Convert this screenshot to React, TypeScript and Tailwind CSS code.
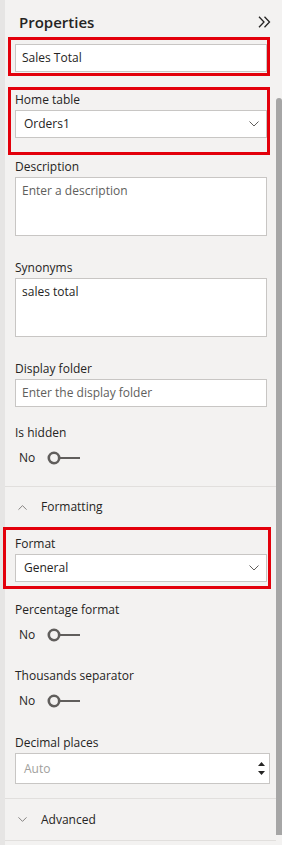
import { ChevronDown, ChevronUp } from 'lucide-react';

const font = { fontFamily: '"Segoe UI", "Open Sans", sans-serif' };

const Label = ({ text }: { text: string }) => (
  <div className="h-[20px] text-[12px] leading-[20px] text-[#252423]">{text}</div>
);

const Toggle = () => (
  <div className="flex h-[24px] items-center pl-[4px]">
    <span className="w-[28px] text-[12px] text-[#252423]">No</span>
    <svg width="36" height="16" viewBox="0 0 36 16">
      <circle cx="7" cy="8" r="5.2" fill="none" stroke="#605e5c" strokeWidth="2.6" />
      <line x1="12.5" y1="8" x2="33" y2="8" stroke="#605e5c" strokeWidth="2" />
    </svg>
  </div>
);

const Select = ({ value }: { value: string }) => (
  <div className="flex h-[28px] w-[252px] items-center justify-between border border-[#c8c6c4] bg-white pl-[8px] pr-[7px] text-[12px] text-[#252423]">
    <span>{value}</span>
    <svg width="10" height="6" viewBox="0 0 10 6">
      <path d="M0.5 0.5 L5 5 L9.5 0.5" fill="none" stroke="#605e5c" strokeWidth="1" />
    </svg>
  </div>
);

export default function App() {
  return (
    <div className="flex h-[845px] w-[282px] overflow-hidden bg-[#f3f2f1]" style={font}>
      {/* left strip */}
      <div className="w-[5px] shrink-0 bg-[#e6e5e4]" />

      <div className="flex w-[271px] shrink-0 flex-col">
        {/* title */}
        <div className="flex h-[37px] items-center justify-between pl-[14px] pr-[5px] pt-[7px]">
          <span className="text-[15px] font-semibold text-[#252423]">Properties</span>
          <svg width="13" height="12" viewBox="0 0 13 12">
            <path d="M1 0.8 L6 6 L1 11.2 M6.5 0.8 L11.5 6 L6.5 11.2" fill="none" stroke="#252423" strokeWidth="1.3" />
          </svg>
        </div>

        {/* name */}
        <div className="ml-[3px] w-[262px] border-[3px] border-[#e3000b] pl-[4px] pt-[4px] pb-[1px]">
          <div className="flex h-[28px] w-[252px] items-center border border-[#c8c6c4] bg-white pl-[6px] text-[12px] text-[#252423]">
            Sales Total
          </div>
        </div>

        {/* home table */}
        <div className="ml-[3px] mt-[11px] h-[68px] w-[262px] border-[3px] border-[#e3000b] pl-[4px]">
          <Label text="Home table" />
          <Select value="Orders1" />
        </div>

        <div className="flex flex-col pl-[10px]">
          <div className="mt-[2px]">
            <Label text="Description" />
            <div className="h-[59px] w-[252px] border border-[#c8c6c4] bg-white px-[6px] pt-[5px] text-[12px] leading-[16px] text-[#605e5c]">
              Enter a description
            </div>
          </div>

          <div className="mt-[22px]">
            <Label text="Synonyms" />
            <div className="h-[59px] w-[252px] border border-[#c8c6c4] bg-white px-[6px] pt-[5px] text-[12px] leading-[16px] text-[#252423]">
              sales total
            </div>
          </div>

          <div className="mt-[22px]">
            <Label text="Display folder" />
            <div className="flex h-[28px] w-[252px] items-center border border-[#c8c6c4] bg-white pl-[6px] text-[12px] text-[#605e5c]">
              Enter the display folder
            </div>
          </div>

          <div className="mt-[16px]">
            <Label text="Is hidden" />
            <div className="mt-[3px]">
              <Toggle />
            </div>
          </div>
        </div>

        {/* formatting */}
        <div className="mt-[16px] h-px w-full bg-[#e1dfdd]" />
        <div className="flex h-[40px] items-center pl-[10px] text-[12px] text-[#252423]">
          <ChevronUp size={15} strokeWidth={1.2} className="text-[#605e5c]" />
          <span className="ml-[11px]">Formatting</span>
        </div>

        <div className="-ml-[2px] h-[62px] w-[268px] border-[3px] border-[#e3000b] pl-[9px] pt-[4px]">
          <Label text="Format" />
          <Select value="General" />
        </div>

        <div className="flex flex-col pl-[10px]">
          <div className="mt-[11px]">
            <Label text="Percentage format" />
            <div className="mt-[3px]">
              <Toggle />
            </div>
          </div>

          <div className="mt-[19px]">
            <Label text="Thousands separator" />
            <div className="mt-[3px]">
              <Toggle />
            </div>
          </div>

          <div className="mt-[20px]">
            <Label text="Decimal places" />
            <div className="flex h-[31px] w-[255px] items-center justify-between border border-[#c8c6c4] bg-white pl-[8px] pr-[4px] text-[12px] text-[#a19f9d]">
              <span>Auto</span>
              <div className="flex flex-col gap-[5px]">
                <svg width="7" height="4" viewBox="0 0 7 4">
                  <path d="M3.5 0 L7 4 L0 4 Z" fill="#252423" />
                </svg>
                <svg width="7" height="4" viewBox="0 0 7 4">
                  <path d="M0 0 L7 0 L3.5 4 Z" fill="#252423" />
                </svg>
              </div>
            </div>
          </div>
        </div>

        {/* advanced */}
        <div className="mt-[14px] h-px w-full bg-[#e1dfdd]" />
        <div className="flex h-[41px] items-center pl-[10px] text-[12px] text-[#252423]">
          <ChevronDown size={15} strokeWidth={1.2} className="text-[#605e5c]" />
          <span className="ml-[11px]">Advanced</span>
        </div>
        <div className="h-px w-full bg-[#e1dfdd]" />
      </div>

      {/* scrollbar */}
      <div className="flex w-[6px] shrink-0 flex-col pt-[98px]">
        <div className="h-[737px] w-[6px] rounded-t-[3px] bg-[#a6a6a6]" />
      </div>
    </div>
  );
}
